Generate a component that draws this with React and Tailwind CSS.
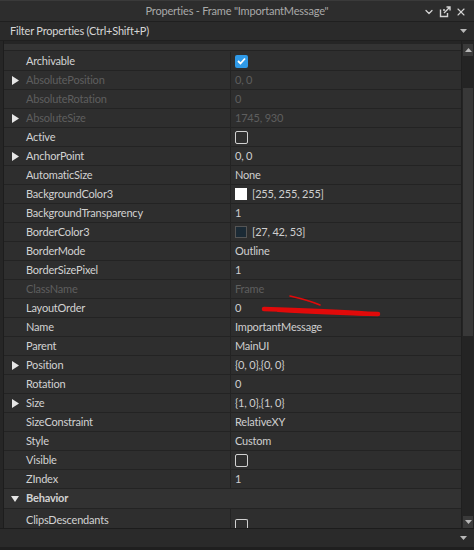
import { ChevronDown, X } from "lucide-react";

const rows = [
  { label: "Archivable", value: { type: "check", on: true } },
  { label: "AbsolutePosition", value: "0, 0", arrow: true, dim: true },
  { label: "AbsoluteRotation", value: "0", dim: true },
  { label: "AbsoluteSize", value: "1745, 930", arrow: true, dim: true },
  { label: "Active", value: { type: "check", on: false } },
  { label: "AnchorPoint", value: "0, 0", arrow: true },
  { label: "AutomaticSize", value: "None" },
  { label: "BackgroundColor3", value: { type: "color", color: "bg-white border-white", text: "[255, 255, 255]" } },
  { label: "BackgroundTransparency", value: "1" },
  { label: "BorderColor3", value: { type: "color", color: "bg-[#1b2a35] border-[#555]", text: "[27, 42, 53]" } },
  { label: "BorderMode", value: "Outline" },
  { label: "BorderSizePixel", value: "1" },
  { label: "ClassName", value: "Frame", dim: true },
  { label: "LayoutOrder", value: "0" },
  { label: "Name", value: "ImportantMessage" },
  { label: "Parent", value: "MainUI" },
  { label: "Position", value: "{0, 0},{0, 0}", arrow: true },
  { label: "Rotation", value: "0" },
  { label: "Size", value: "{1, 0},{1, 0}", arrow: true },
  { label: "SizeConstraint", value: "RelativeXY" },
  { label: "Style", value: "Custom" },
  { label: "Visible", value: { type: "check", on: false } },
  { label: "ZIndex", value: "1" },
];

function RightArrow() {
  return (
    <svg width="7" height="9" viewBox="0 0 7 9">
      <path d="M0 0 L7 4.5 L0 9 Z" fill="#e6e6e6" />
    </svg>
  );
}

function Checkbox({ on }) {
  if (on) {
    return (
      <div className="w-[13px] h-[13px] rounded-[2px] bg-[#2f9ae8] flex items-center justify-center">
        <svg width="9" height="8" viewBox="0 0 9 8">
          <path d="M1 4 L3.5 6.5 L8 1.5" stroke="white" strokeWidth="1.8" fill="none" />
        </svg>
      </div>
    );
  }
  return <div className="w-[13px] h-[13px] rounded-[2px] border border-[#d0d0d0]" />;
}

function Value({ value, dim }) {
  if (typeof value === "string") {
    return <span className={dim ? "text-[#5e5e5e]" : "text-[#cfcfcf]"}>{value}</span>;
  }
  if (value.type === "check") return <Checkbox on={value.on} />;
  return (
    <div className="flex items-center gap-[5px]">
      <div className={`w-[12px] h-[12px] border ${value.color}`} />
      <span className="text-[#cfcfcf]">{value.text}</span>
    </div>
  );
}

function Row({ row }) {
  return (
    <div className="flex h-[19px] border-b border-[#232323] bg-[#2e2e2e]">
      <div className="w-[227px] flex items-center border-r border-[#232323]">
        <div className="w-[22px] flex justify-center">{row.arrow && <RightArrow />}</div>
        <span className={row.dim ? "text-[#5e5e5e]" : "text-[#d2d2d2]"}>{row.label}</span>
      </div>
      <div className="flex-1 flex items-center pl-[4px]">
        <Value value={row.value} dim={row.dim} />
      </div>
    </div>
  );
}

function SmallTri({ up }) {
  return (
    <svg width="7" height="4" viewBox="0 0 7 4">
      <path d={up ? "M0 4 L3.5 0 L7 4 Z" : "M0 0 L3.5 4 L7 0 Z"} fill="#b8b8b8" />
    </svg>
  );
}

export default function App() {
  return (
    <div
      className="w-[474px] h-[550px] bg-[#2e2e2e] flex flex-col overflow-hidden relative text-[11px] tracking-[-0.2px]"
      style={{ fontFamily: "Lato, 'Open Sans', sans-serif" }}
    >
      {/* title bar */}
      <div className="h-[21px] bg-[#2d2d2d] border-t border-[#3a3a3a] flex items-center relative">
        <div className="flex-1 text-center text-[11px] text-[#a9a9a9] pt-[1px]">
          Properties - Frame "ImportantMessage"
        </div>
        <div className="absolute right-[7px] top-[5px] flex items-center gap-[4px] text-[#d4d4d4]">
          <ChevronDown size={12} strokeWidth={2.5} />
          <svg width="12" height="12" viewBox="0 0 12 12">
            <path d="M1.5 3.5 V10.5 H8.5 V7" stroke="#d4d4d4" strokeWidth="1.4" fill="none" />
            <path d="M4 4 H6" stroke="#d4d4d4" strokeWidth="1.4" />
            <path d="M5 7 L11 1 M7.5 1 H11 V4.5" stroke="#d4d4d4" strokeWidth="1.4" fill="none" />
          </svg>
          <X size={12} strokeWidth={2.2} />
        </div>
      </div>

      {/* filter */}
      <div className="h-[20px] bg-[#2a2a2a] border-y border-[#1f1f1f] flex items-center pl-[10px] pr-[7px]">
        <span className="flex-1 text-[#d6d6d6]">Filter Properties (Ctrl+Shift+P)</span>
        <SmallTri />
      </div>

      {/* list */}
      <div className="flex flex-1 min-h-0">
        <div className="w-[4px] bg-[#262626] border-r border-[#1d1d1d]" />
        <div className="flex-1 flex flex-col min-w-0">
          <div className="h-[3px] bg-[#252525]" />
          <div className="h-[7px] bg-[#333333] border-b border-[#232323]" />
          <div className="h-[1px]" />
          {rows.map((r) => (
            <Row key={r.label} row={r} />
          ))}
          <div className="flex h-[20px] items-center bg-[#323232] border-b border-[#232323]">
            <div className="w-[22px] flex justify-center">
              <svg width="8" height="6" viewBox="0 0 8 6">
                <path d="M0 0 L8 0 L4 6 Z" fill="#e6e6e6" />
              </svg>
            </div>
            <span className="font-bold text-[#d2d2d2]">Behavior</span>
          </div>
          <div className="flex h-[19px] bg-[#2e2e2e]">
            <div className="w-[227px] flex items-center border-r border-[#232323] pt-[4px]">
              <div className="w-[22px]" />
              <span className="text-[#d2d2d2]">ClipsDescendants</span>
            </div>
            <div className="flex-1 flex items-end pl-[4px]">
              <div className="w-[13px] h-[9px] rounded-t-[2px] border border-b-0 border-[#d0d0d0]" />
            </div>
          </div>
        </div>
        {/* scrollbar */}
        <div className="w-[13px] bg-[#242424] flex flex-col border-l border-[#1f1f1f]">
          <div className="h-[3px]" />
          <div className="h-[12px] mx-[1px] bg-[#3a3a3a] flex items-center justify-center">
            <SmallTri up />
          </div>
          <div className="h-[32px]" />
          <div className="h-[248px] mx-[1px] bg-[#383838]" />
          <div className="flex-1" />
          <div className="h-[12px] mx-[1px] bg-[#3a3a3a] flex items-center justify-center">
            <SmallTri />
          </div>
        </div>
      </div>

      {/* bottom bar */}
      <div className="h-[19px] bg-[#2a2a2a] border-t border-[#1c1c1c] flex items-center justify-end pr-[7px]">
        <SmallTri />
      </div>
      <div className="h-[3px] bg-[#1f1f1f]" />

      {/* red scribble */}
      <svg className="absolute left-[258px] top-[293px]" width="126" height="28" viewBox="0 0 126 28">
        <path d="M32 3 C45 6 55 9 62 12" stroke="#e10a0a" strokeWidth="1.6" fill="none" strokeLinecap="round" />
        <path d="M6 16 C40 17 70 18 100 20 C110 21 116 21 120 21" stroke="#e10a0a" strokeWidth="4.5" fill="none" strokeLinecap="round" />
        <path d="M20 18 C50 20 80 21 110 22" stroke="#e10a0a" strokeWidth="2" fill="none" strokeLinecap="round" />
      </svg>
    </div>
  );
}
